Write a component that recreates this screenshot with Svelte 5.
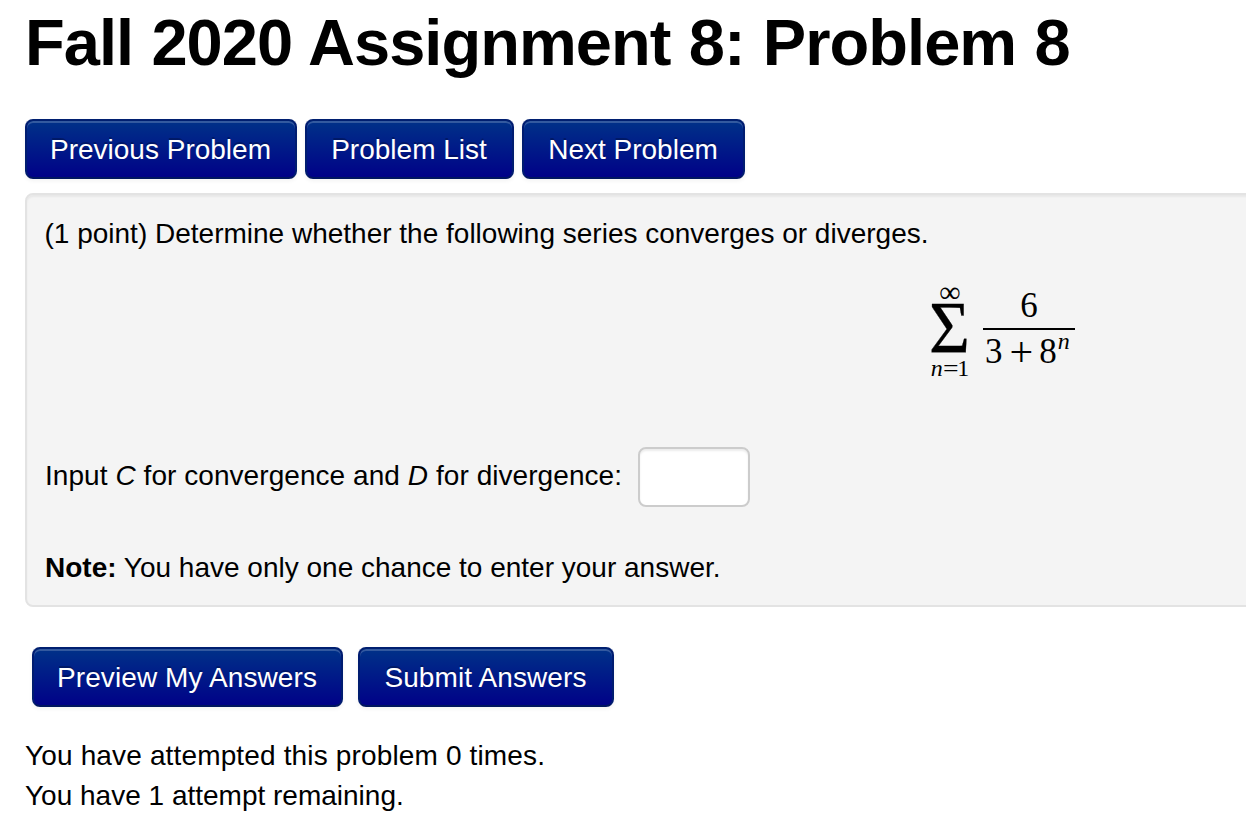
<script>
  const nav = [
    { label: 'Previous Problem', width: 272 },
    { label: 'Problem List', width: 209 },
    { label: 'Next Problem', width: 223 }
  ];
  const actions = [
    { label: 'Preview My Answers', width: 311 },
    { label: 'Submit Answers', width: 256 }
  ];
  let answer = $state('');
</script>

<main>
  <h1>Fall 2020 Assignment 8: Problem 8</h1>

  <nav>
    {#each nav as item}
      <button style="width: {item.width}px">{item.label}</button>
    {/each}
  </nav>

  <section class="problem">
    <p class="question">(1 point) Determine whether the following series converges or diverges.</p>

    <div class="math">
      <div class="sum">
        <span class="upper">∞</span>
        <span class="sigma"><span>Σ</span></span>
        <span class="lower"><i>n</i><span class="equals">=</span><span>1</span></span>
      </div>
      <div class="fraction">
        <span class="numerator">6</span>
        <span class="denominator"><span>3</span><span class="plus">+</span><span>8</span><i>n</i></span>
      </div>
    </div>

    <label class="entry">
      <span class="prompt">Input <i>C</i> for convergence and <i>D</i> for divergence:</span>
      <input type="text" bind:value={answer} />
    </label>

    <p class="note"><b>Note:</b> <span>You have only one chance to enter your answer.</span></p>
  </section>

  <div class="actions">
    {#each actions as item}
      <button style="width: {item.width}px">{item.label}</button>
    {/each}
  </div>

  <p class="status">
    <span class="attempted">You have attempted this problem 0 times.</span><br />
    <span class="remaining">You have 1 attempt remaining.</span>
  </p>
</main>

<style>
  :global(body) {
    background: #fff;
    overflow: hidden;
  }

  main {
    box-sizing: border-box;
    width: 1246px;
    height: 824px;
    padding-left: 25px;
    overflow: hidden;
    color: #000;
    font: 28px/40px "Liberation Sans", Arial, sans-serif;
    white-space: nowrap;
  }

  h1, p {
    margin: 0;
  }

  h1 {
    height: 119px;
    box-sizing: border-box;
    padding-top: 1px;
    font-size: 65px;
    line-height: 84px;
    letter-spacing: -0.95px;
    word-spacing: 1.1px;
  }

  nav {
    display: flex;
    gap: 8px;
  }

  button {
    box-sizing: border-box;
    height: 60px;
    padding: 1px 1px 0 0;
    border: 2px solid;
    border-color: #001f70 #001c70 #001660;
    border-radius: 8px;
    color: #fff;
    background: linear-gradient(#038 0%, #008 100%) border-box;
    box-shadow: inset 0 2px 0 rgba(255, 255, 255, 0.2), 0 2px 4px rgba(0, 0, 0, 0.05);
    font: inherit;
    text-shadow: 0 -2px 0 rgba(0, 0, 0, 0.25);
  }

  .actions button {
    letter-spacing: 0.1px;
  }

  .problem {
    box-sizing: border-box;
    width: 1240px;
    height: 414px;
    margin-top: 14px;
    padding: 19px 0 0 18px;
    border: 2px solid #e3e3e3;
    border-radius: 8px;
    background: #f4f4f4;
    box-shadow: inset 0 2px 2px rgba(0, 0, 0, 0.05);
  }

  .question {
    text-indent: -0.5px;
  }

  .math {
    display: flex;
    gap: 13px;
    height: 193px;
    padding: 29px 0 0 885px;
    box-sizing: border-box;
    font-family: "Liberation Serif", "Times New Roman", serif;
    font-size: 35px;
    line-height: 36px;
  }

  .sum {
    display: flex;
    flex-direction: column;
    align-items: center;
    width: 40px;
  }

  .upper {
    height: 20px;
    font-size: 30px;
    line-height: 17px;
  }

  .sigma {
    display: flex;
    justify-content: center;
    height: 50px;
    line-height: 51px;
    font-size: 74px;
    transform: scaleX(0.95);
    -webkit-text-stroke: 0.3px #000;
  }

  .lower {
    display: flex;
    height: 30px;
    font-size: 24px;
    line-height: 30px;
  }

  .equals {
    margin: 0 0 0 1px;
    transform: scaleX(1.15);
  }

  .fraction {
    display: flex;
    flex-direction: column;
    align-items: center;
    width: 92px;
    padding-top: 5px;
  }

  .numerator {
    height: 40px;
  }

  .denominator {
    display: flex;
    width: 92px;
    box-sizing: border-box;
    padding: 4px 0 0 2px;
    border-top: 2px solid #000;
  }

  .plus {
    margin: 0 6px 0 7px;
    font-size: 42px;
  }

  .denominator i {
    margin-left: 1px;
    font-size: 24px;
    line-height: 14px;
  }

  .entry {
    display: flex;
    align-items: center;
    height: 60px;
  }

  .prompt {
    width: 593px;
    padding-bottom: 3px;
    letter-spacing: 0.06px;
  }

  input {
    box-sizing: border-box;
    width: 112px;
    height: 60px;
    border: 2px solid #ccc;
    border-radius: 8px;
    background: #fff;
    box-shadow: inset 0 2px 2px rgba(0, 0, 0, 0.075);
    font: inherit;
    outline: 0;
  }

  .note {
    margin-top: 41px;
  }

  .actions {
    display: flex;
    gap: 15px;
    margin-top: 40px;
    padding-left: 7px;
  }

  .status {
    margin-top: 29px;
  }

  .attempted {
    letter-spacing: 0.15px;
  }
</style>
